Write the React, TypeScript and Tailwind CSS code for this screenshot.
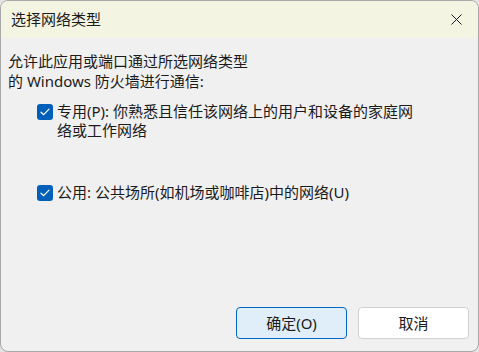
import React from 'react';

function Check() {
  return (
    <span className="flex h-[16px] w-[16px] shrink-0 items-center justify-center rounded-[3px] bg-[#005fb8]">
      <svg width="10" height="8" viewBox="0 0 10 8" fill="none">
        <path d="M1 4.2 L3.7 6.7 L9 1.2" stroke="white" strokeWidth="1.2" strokeLinecap="round" strokeLinejoin="round" />
      </svg>
    </span>
  );
}

export default function App() {
  const font = { fontFamily: '"Noto Sans", "Noto Sans CJK SC", sans-serif' };
  return (
    <div className="h-[352px] w-[479px] bg-[#e4e4e4]" style={font}>
      <div className="flex h-full w-full flex-col overflow-hidden rounded-[8px] border border-[#a8a8a8] bg-[#f0f0f0] text-[#1b1b1b]">
        <div className="flex h-[37px] shrink-0 items-center justify-between bg-[#f4f4e2] pl-[10px] pr-[16px]">
          <span className="text-[15px] leading-none">选择网络类型</span>
          <svg width="11" height="11" viewBox="0 0 11 11" fill="none">
            <path d="M0.5 0.5 L10.5 10.5 M10.5 0.5 L0.5 10.5" stroke="#1b1b1b" strokeWidth="1" />
          </svg>
        </div>

        <div className="flex flex-1 flex-col px-[7px] pt-[13px]">
          <p className="whitespace-nowrap text-[15px] leading-[20px]">
            允许此应用或端口通过所选网络类型
            <br />
            的 Windows 防火墙进行通信:
          </p>

          <div className="ml-[29px] mt-[11px] flex gap-[4px]">
            <div className="mt-[2px]">
              <Check />
            </div>
            <span className="whitespace-nowrap text-[15px] leading-[19px]">
              专用(P): 你熟悉且信任该网络上的用户和设备的家庭网
              <br />
              络或工作网络
            </span>
          </div>

          <div className="ml-[29px] mt-[43px] flex items-center gap-[4px]">
            <Check />
            <span className="whitespace-nowrap text-[15px] leading-[19px]">公用: 公共场所(如机场或咖啡店)中的网络(U)</span>
          </div>

          <div className="mb-[12px] mr-[2px] mt-auto flex justify-end gap-[11px]">
            <button className="h-[32px] w-[111px] rounded-[4px] border border-[#0067c0] bg-[#e0eef9] text-[15px] text-[#1b1b1b]">
              确定(O)
            </button>
            <button className="h-[32px] w-[111px] rounded-[4px] border border-[#d0d0d0] bg-white text-[15px] text-[#1b1b1b]">
              取消
            </button>
          </div>
        </div>
      </div>
    </div>
  );
}
